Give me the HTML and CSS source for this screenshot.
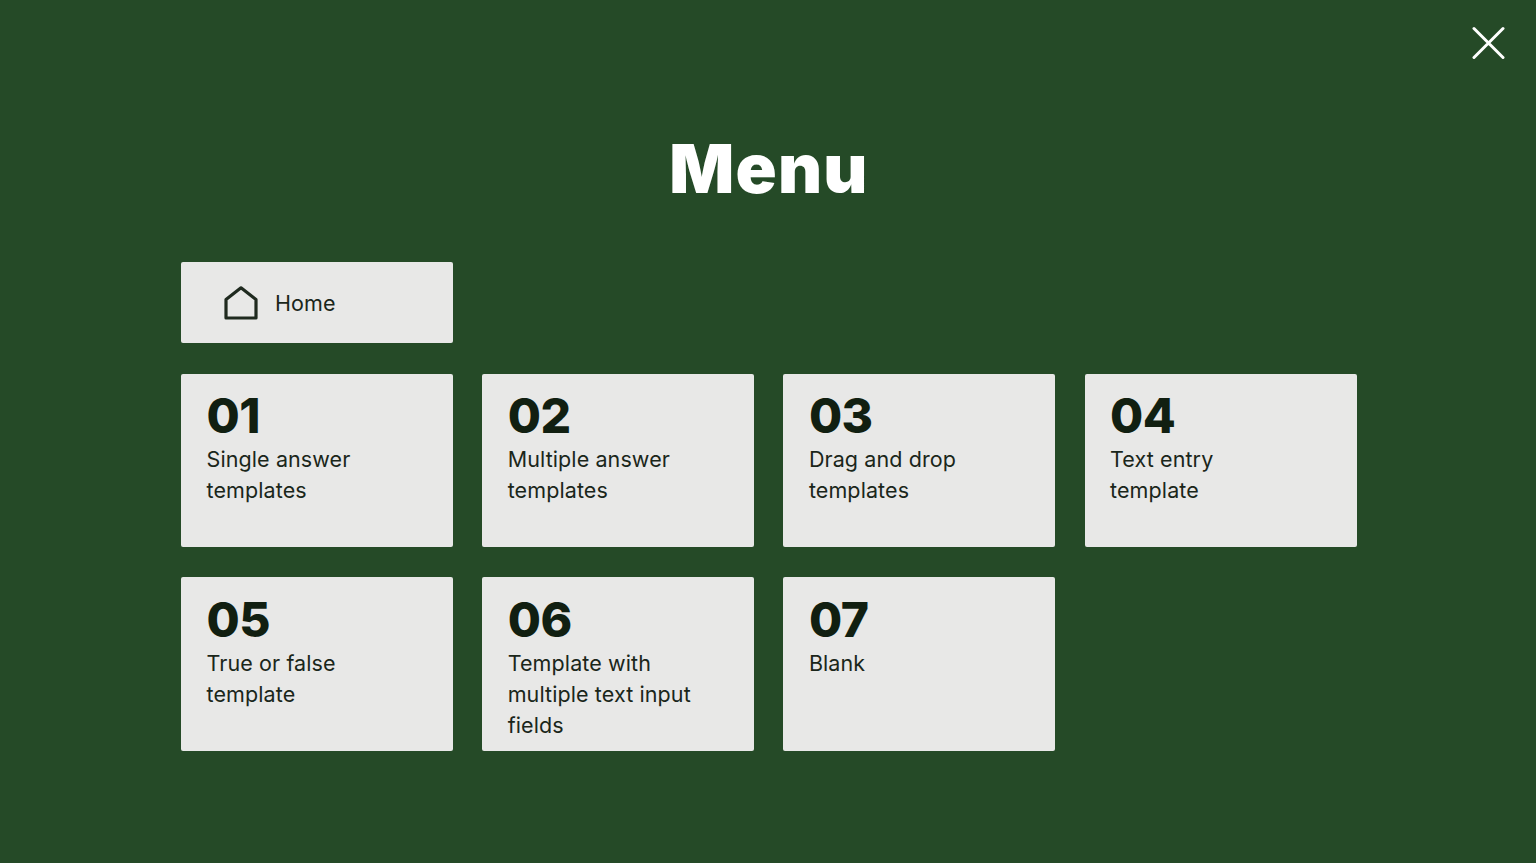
FILE: index.html
```html
<!DOCTYPE html>
<html lang="en">
<head>
    <meta charset="UTF-8">
    <meta name="viewport" content="width=device-width, initial-scale=1.0">
    <title>Menu</title>

    <link rel="stylesheet" href="styles.css">
</head>
<body>
    <button class="close-btn" aria-label="Close">
        <svg width="34" height="34" viewBox="0 0 34 34" fill="none" stroke="#fff" stroke-width="3" stroke-linecap="round">
            <path d="M3 2.5L32 31.5M32 2.5L3 31.5"/>
        </svg>
    </button>

    <main class="menu">
        <h1>Menu</h1>

        <div class="menu-grid">
            <a class="home-card" href="#">
                <svg class="home-icon" width="34" height="34" viewBox="0 0 34 34" fill="none" stroke="#1f2a1f" stroke-width="3.2" stroke-linejoin="round">
                    <path d="M2 13.5L17 1.8L32 13.5V32H2Z"/>
                </svg>
                <span>Home</span>
            </a>

            <a class="card first-col" href="#">
                <h2>01</h2>
                <p>Single answer<br>templates</p>
            </a>
            <a class="card" href="#">
                <h2>02</h2>
                <p>Multiple answer<br>templates</p>
            </a>
            <a class="card" href="#">
                <h2>03</h2>
                <p>Drag and drop<br>templates</p>
            </a>
            <a class="card" href="#">
                <h2>04</h2>
                <p>Text entry<br>template</p>
            </a>
            <a class="card first-col" href="#">
                <h2>05</h2>
                <p>True or false<br>template</p>
            </a>
            <a class="card" href="#">
                <h2>06</h2>
                <p>Template with<br>multiple text input<br>fields</p>
            </a>
            <a class="card" href="#">
                <h2>07</h2>
                <p>Blank</p>
            </a>
        </div>
    </main>
</body>
</html>
```

FILE: styles.css
```css
body{
    margin: 0;
    height: 100vh;
    overflow: hidden;
    background-color: #254a27;
    font-family: "Inter", "Noto Sans", sans-serif;
    color: #111f11;
}
.close-btn{
    position: absolute;
    top: 26px;
    right: 31px;
    width: 34px;
    height: 34px;
    padding: 0;
    background: none;
    border: none;
    display: block;
}
.close-btn svg{
    display: block;
}
.menu{
    width: 1176px;
    margin-left: 181px;
    padding-top: 127px;
}
.menu h1{
    margin: 0 0 53px;
    height: 82px;
    line-height: 82px;
    font-size: 68px;
    font-weight: 900;
    letter-spacing: 1.2px;
    text-align: center;
    color: #fff;
}
.menu-grid{
    display: grid;
    grid-template-columns: repeat(4, 272px);
    grid-template-rows: 81px 173px 174px;
    column-gap: 29.2px;
    row-gap: 30.5px;
}
.home-card,
.card{
    background-color: #e8e8e7;
    border-radius: 2px;
    color: inherit;
    text-decoration: none;
}
.home-card{
    grid-column: 1 / -1;
    width: 272px;
    display: flex;
    align-items: center;
    padding-left: 43px;
    box-sizing: border-box;
}
.home-icon{
    margin-right: 17px;
}
.home-card span{
    padding-top: 1px;
    font-size: 21.5px;
    letter-spacing: 0.1px;
    color: #1a261a;
}
.card{
    padding: 14.5px 0 0 25.5px;
}
.first-col{
    grid-column: 1;
}
.card h2{
    margin: 0;
    height: 56px;
    line-height: 56px;
    font-size: 48px;
    font-weight: 800;
    letter-spacing: -0.5px;
}
.card p{
    margin: 0;
    font-size: 21.5px;
    letter-spacing: 0.1px;
    line-height: 31px;
    color: #1a261a;
}
```
